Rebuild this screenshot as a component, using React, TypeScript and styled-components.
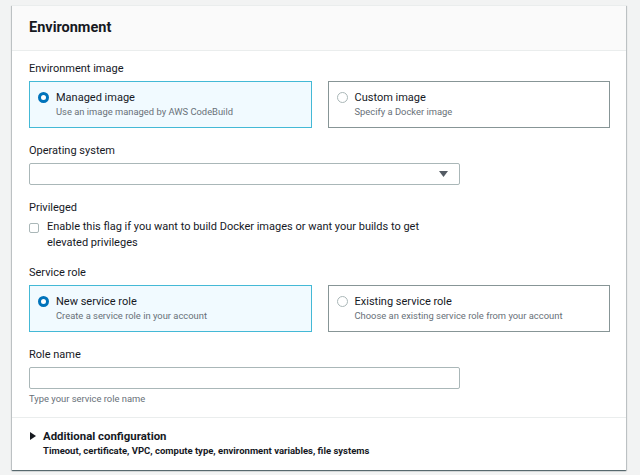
import styled, { createGlobalStyle } from "styled-components";

const GlobalStyle = createGlobalStyle`
  html, body {
    margin: 0;
    padding: 0;
    background: #f2f3f3;
    font-family: Roboto, "Liberation Sans", Arial, sans-serif;
    color: #16191f;
  }
`;

function RadioTile({
  title,
  description,
  checked,
}: {
  title: string;
  description: string;
  checked?: boolean;
}) {
  return (
    <Tile $checked={checked}>
      <RadioDot $checked={checked} />
      <TileText>
        <TileTitle>{title}</TileTitle>
        <TileDescription>{description}</TileDescription>
      </TileText>
    </Tile>
  );
}

function App() {
  return (
    <Page>
      <GlobalStyle />
      <Card>
        <Header>
          <Heading>Environment</Heading>
        </Header>
        <Body>
          <Field>
            <Label>Environment image</Label>
            <TileGrid>
              <RadioTile
                checked
                title="Managed image"
                description="Use an image managed by AWS CodeBuild"
              />
              <RadioTile
                title="Custom image"
                description="Specify a Docker image"
              />
            </TileGrid>
          </Field>

          <Field>
            <Label>Operating system</Label>
            <Select>
              <svg width="9" height="6" viewBox="0 0 9 6">
                <path d="M0 0h9L4.5 6z" fill="#545b64" />
              </svg>
            </Select>
          </Field>

          <Field>
            <Label>Privileged</Label>
            <CheckRow>
              <CheckBox />
              <CheckText>
                Enable this flag if you want to build Docker images or want
                your builds to get elevated privileges
              </CheckText>
            </CheckRow>
          </Field>

          <Field>
            <Label>Service role</Label>
            <TileGrid>
              <RadioTile
                checked
                title="New service role"
                description="Create a service role in your account"
              />
              <RadioTile
                title="Existing service role"
                description="Choose an existing service role from your account"
              />
            </TileGrid>
          </Field>

          <Field>
            <Label>Role name</Label>
            <Input />
            <Hint>Type your service role name</Hint>
          </Field>
        </Body>
        <Expander>
          <ExpanderTitle>
            <svg width="6" height="8" viewBox="0 0 6 8">
              <path d="M0 0l6 4-6 4z" fill="#16191f" />
            </svg>
            Additional configuration
          </ExpanderTitle>
          <ExpanderSub>
            Timeout, certificate, VPC, compute type, environment variables,
            file systems
          </ExpanderSub>
        </Expander>
      </Card>
    </Page>
  );
}

export default App;

const Page = styled.div`
  padding: 5px 14px 5px 12px;
`;

const Card = styled.div`
  background: #fff;
  box-shadow:
    0 1px 1px 0 rgba(0, 28, 36, 0.5),
    1px 1px 1px 0 rgba(0, 28, 36, 0.15),
    -1px 1px 1px 0 rgba(0, 28, 36, 0.15);
  border-top: 1px solid #eaeded;
`;

const Header = styled.div`
  background: #fafafa;
  border-bottom: 1px solid #eaeded;
  padding: 0 17px;
  height: 44px;
  display: flex;
  align-items: center;
`;

const Heading = styled.h2`
  margin: 0;
  font-size: 14.5px;
  font-weight: 700;
  line-height: 18px;
`;

const Body = styled.div`
  padding: 10px 16px 11px 17px;
  display: flex;
  flex-direction: column;
  gap: 15px;
  border-bottom: 1px solid #eaeded;
`;

const Field = styled.div`
  display: flex;
  flex-direction: column;
`;

const Label = styled.div`
  font-size: 11px;
  line-height: 16px;
  margin-bottom: 4px;
`;

const TileGrid = styled.div`
  display: grid;
  grid-template-columns: 1fr 1fr;
  gap: 16px;
`;

const Tile = styled.div<{ $checked?: boolean }>`
  height: 47px;
  box-sizing: border-box;
  border: 1px solid ${(p) => (p.$checked ? "#44b9d6" : "#879596")};
  background: ${(p) => (p.$checked ? "#f1faff" : "#fff")};
  display: flex;
  align-items: flex-start;
  padding: 9px 8px 0;
  gap: 7px;
`;

const RadioDot = styled.span<{ $checked?: boolean }>`
  width: 11px;
  height: 11px;
  box-sizing: border-box;
  border-radius: 50%;
  margin-top: 1px;
  flex: none;
  border: ${(p) => (p.$checked ? "3px solid #0073bb" : "1px solid #aab7b8")};
  background: #fff;
`;

const TileText = styled.div`
  display: flex;
  flex-direction: column;
`;

const TileTitle = styled.div`
  font-size: 11px;
  line-height: 14px;
`;

const TileDescription = styled.div`
  font-size: 9.4px;
  line-height: 14px;
  color: #687078;
`;

const Select = styled.div`
  width: 431px;
  height: 22px;
  box-sizing: border-box;
  border: 1px solid #aab7b8;
  border-radius: 2px;
  display: flex;
  align-items: center;
  justify-content: flex-end;
  padding-right: 11px;
`;

const Input = styled.div`
  width: 431px;
  height: 22px;
  box-sizing: border-box;
  border: 1px solid #aab7b8;
  border-radius: 2px;
`;

const CheckRow = styled.div`
  display: flex;
  gap: 8px;
  margin: -1px 0;
`;

const CheckBox = styled.span`
  width: 10px;
  height: 10px;
  box-sizing: border-box;
  border: 1px solid #aab7b8;
  border-radius: 2px;
  margin-top: 4px;
  flex: none;
`;

const CheckText = styled.div`
  font-size: 11px;
  line-height: 16px;
  max-width: 390px;
`;

const Hint = styled.div`
  font-size: 9.4px;
  line-height: 14px;
  color: #687078;
  margin-top: 3px;
`;

const Expander = styled.div`
  padding: 10px 17px 12px 17px;
`;

const ExpanderTitle = styled.div`
  display: flex;
  align-items: center;
  gap: 7px;
  font-size: 11.4px;
  line-height: 16px;
  font-weight: 700;
  svg {
    margin-left: 1px;
  }
`;

const ExpanderSub = styled.div`
  font-size: 9.5px;
  line-height: 14px;
  font-weight: 700;
  color: #16191f;
  padding-left: 14px;
`;
